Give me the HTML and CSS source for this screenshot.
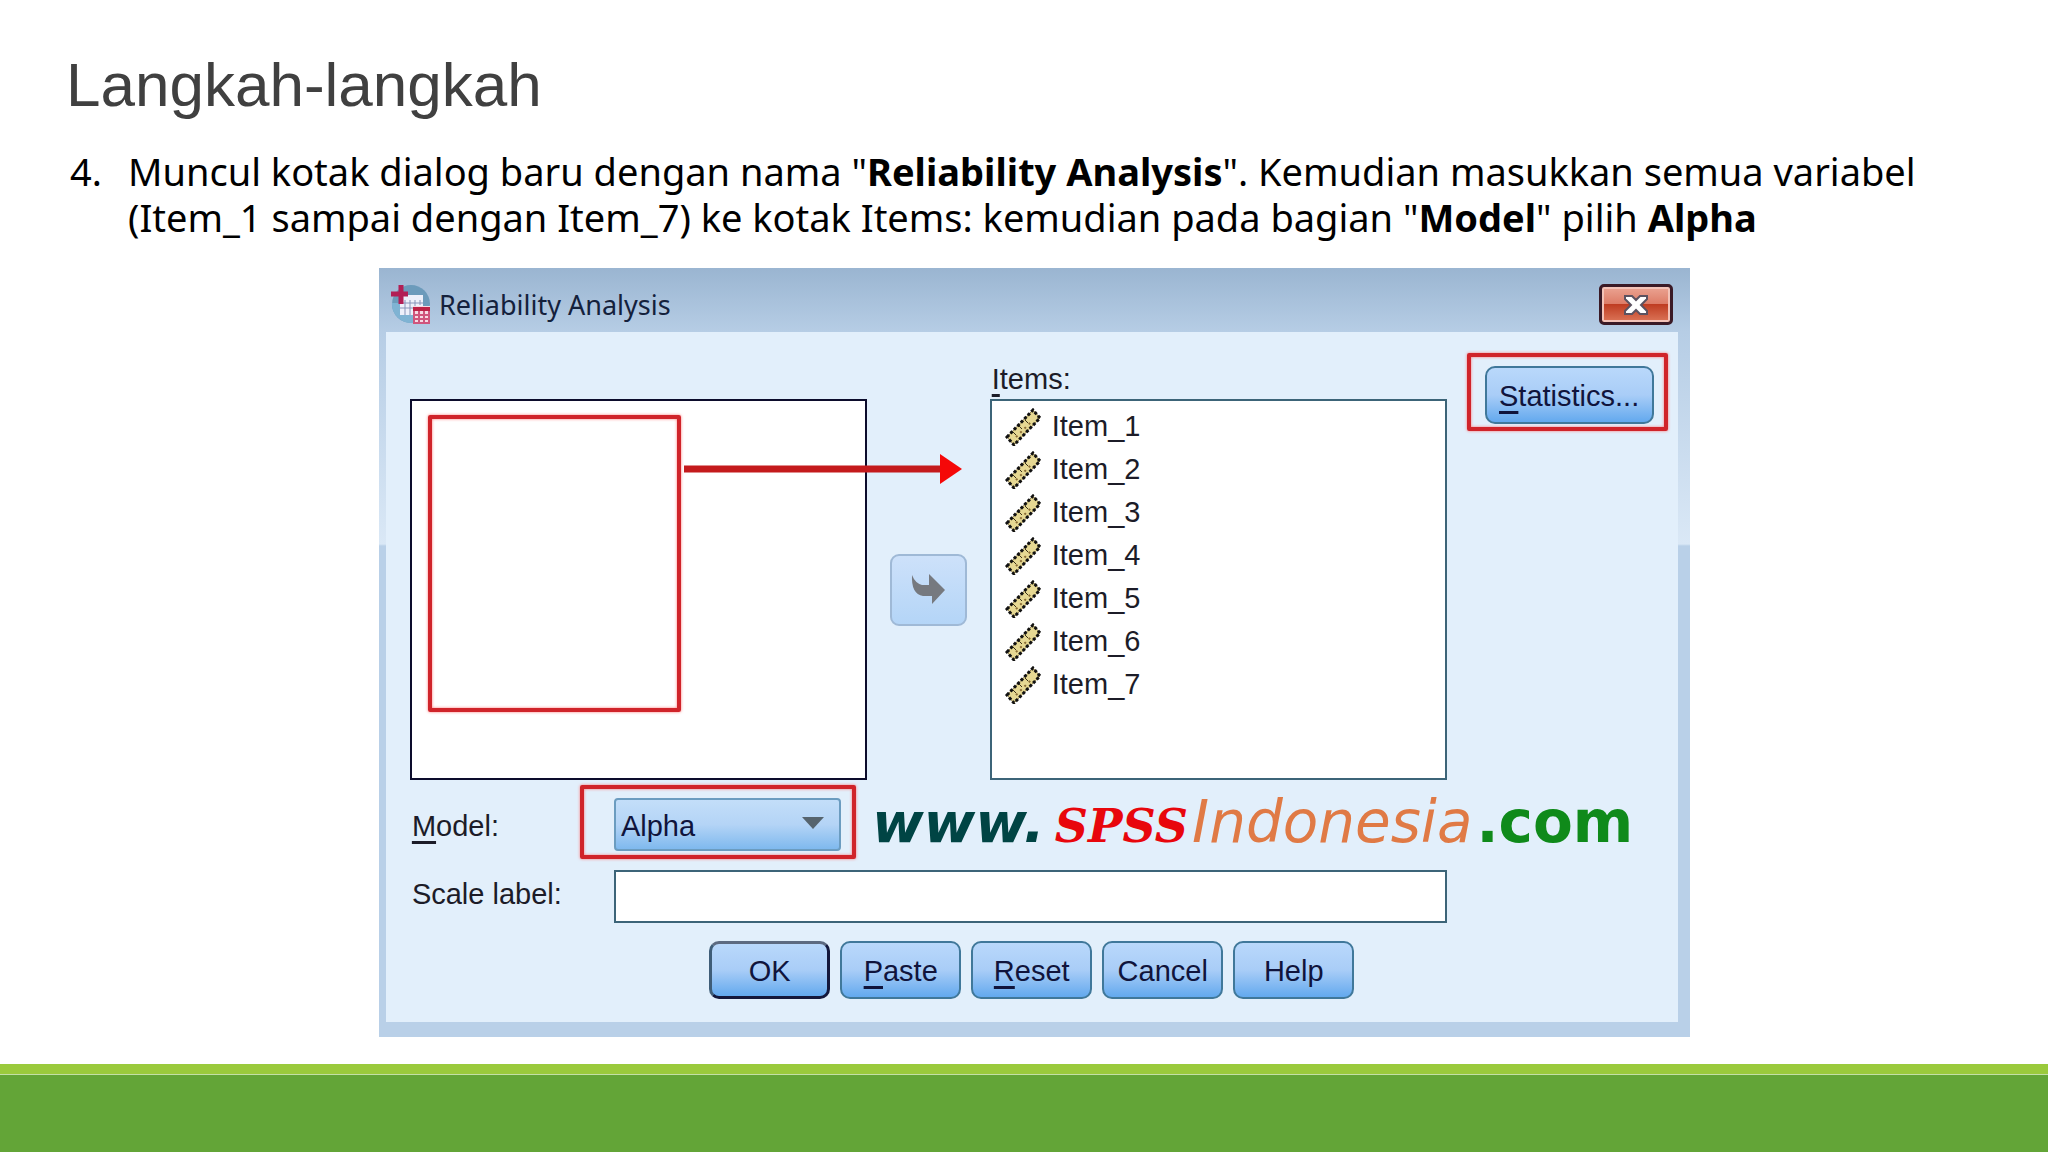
FILE: index.html
```html
<!DOCTYPE html>
<html lang="id">
<head>
    <meta charset="UTF-8">
    <meta name="viewport" content="width=device-width, initial-scale=1.0">
    <title>Langkah-langkah</title>
    <link rel="stylesheet" href="styles.css">
</head>
<body>

<!-- Shared icons -->
<svg class="defs" aria-hidden="true">
    <symbol id="ruler" viewBox="0 0 36 38">
        <path d="M2 29 L28 2 L35 10 L9 37 Z" fill="#e6d893" stroke="#8d7c45" stroke-width="1"/>
        <path d="M2 29 L28 2 L35 10 L9 37 Z" fill="none" stroke="#111" stroke-width="3" stroke-dasharray="3 2"/>
        <path d="M11 29 L28 12" stroke="#8a6c35" stroke-width="2" stroke-dasharray="2 4"/>
        <path d="M8 24 l3 3 M14 18 l3 3 M20 12 l3 3" stroke="#3a3016" stroke-width="1"/>
    </symbol>
</svg>

<main class="slide">
    <h1>Langkah-langkah</h1>
    <ol class="steps">
        <li>
            <p>Muncul kotak dialog baru dengan nama "<strong>Reliability Analysis</strong>". Kemudian masukkan semua variabel (Item_1 sampai dengan Item_7) ke kotak Items: kemudian pada bagian "<strong>Model</strong>" pilih <strong>Alpha</strong></p>
        </li>
    </ol>

    <section class="dialog">
        <header class="title-bar">
            <svg class="app-icon" viewBox="0 0 40 40">
                <circle cx="20" cy="19" r="19" fill="#6c9bbb"/>
                <path d="M1 18 A19 19 0 0 0 22 38 V18 Z" fill="#7fb3d3"/>
                <path d="M9 10 H32 V30 H9 Z" fill="#edf0fa"/>
                <path d="M9 18 H32 M9 23 H24 M14 15 V30 M19 15 V30 M24 15 V24 M29 15 V20" stroke="#8794b9" stroke-width="1"/>
                <path d="M0 9 H17 M10 0 V19" stroke="#b21f55" stroke-width="5"/>
                <path d="M22 21 H39 V38 H22 Z" fill="#f6d9e3"/>
                <path d="M22 22 H39 V26 H22 Z" fill="#bd2247"/>
                <path d="M22 30 H39 M22 34 H39 M22 38 H39 M23 26 V38 M28 26 V38 M33 26 V38 M38 26 V38" stroke="#d0557c" stroke-width="2"/>
            </svg>
            <h2>Reliability Analysis</h2>
            <button type="button" class="close" aria-label="Close">
                <svg viewBox="0 0 26 22"><path d="M2 2 H9 L13 6 L17 2 H24 V5 L18 11 L24 17 V20 H17 L13 16 L9 20 H2 V17 L8 11 L2 5 Z" fill="#fff" stroke="#5c5260" stroke-width="2"/></svg>
            </button>
        </header>

        <form class="dialog-body">
            <div class="variables">
                <div class="listbox source">
                    <div class="mark source-mark"></div>
                    <svg class="arrow" viewBox="0 0 278 30">
                        <path d="M0 15 H258" stroke="#c41a1c" stroke-width="7"/>
                        <path d="M256 0 L278 15 L256 30 Z" fill="#f50808"/>
                    </svg>
                </div>
                <button type="button" class="move" aria-label="Move" disabled>
                    <svg viewBox="0 0 34 30"><path d="M1 1 Q4 9 11 11 H18 V0 L34 16 L21 30 V22 H12 Q0 20 1 1 Z" fill="#76797f"/></svg>
                </button>
                <div class="target">
                    <span class="caption" id="items"><u>I</u>tems:</span>
                    <ul class="listbox" aria-labelledby="items">
                        <li><svg><use href="#ruler"/></svg>Item_1</li>
                        <li><svg><use href="#ruler"/></svg>Item_2</li>
                        <li><svg><use href="#ruler"/></svg>Item_3</li>
                        <li><svg><use href="#ruler"/></svg>Item_4</li>
                        <li><svg><use href="#ruler"/></svg>Item_5</li>
                        <li><svg><use href="#ruler"/></svg>Item_6</li>
                        <li><svg><use href="#ruler"/></svg>Item_7</li>
                    </ul>
                </div>
                <div class="mark stats-mark">
                    <button type="button" class="btn"><span><u>S</u>tatistics...</span></button>
                </div>
            </div>

            <div class="row model-row">
                <label for="model"><u>M</u>odel:</label>
                <div class="mark model-mark">
                    <select id="model">
                        <option>Alpha</option>
                    </select>
                    <svg class="caret" viewBox="0 0 22 12"><path d="M0 0 H22 L11 12 Z" fill="#56646e"/></svg>
                </div>
                <div class="site">
                    <span class="www">www.</span>
                    <span class="spss">SPSS</span>
                    <span class="indonesia">Indonesia</span>
                    <span class="com">.com</span>
                </div>
            </div>

            <div class="row">
                <label for="scale">Scale label:</label>
                <input type="text" id="scale">
            </div>

            <div class="buttons">
                <button type="button" class="btn default">OK</button>
                <button type="button" class="btn"><span><u>P</u>aste</span></button>
                <button type="button" class="btn"><span><u>R</u>eset</span></button>
                <button type="button" class="btn">Cancel</button>
                <button type="button" class="btn">Help</button>
            </div>
        </form>
    </section>
</main>
<footer class="band"></footer>

</body>
</html>
```
FILE: styles.css
```css
* {
    box-sizing: border-box;
}
body {
    margin: 0;
    min-height: 100vh;
    display: flex;
    flex-direction: column;
    background-color: #fff;
    color: #000;
    font-family: "Noto Sans", sans-serif;
}
.defs {
    position: absolute;
    width: 0;
    height: 0;
}
h1 {
    margin: 42px 66px 0;
    font-family: "Liberation Sans Narrow", "Liberation Sans", sans-serif;
    font-size: 62px;
    font-weight: normal;
    line-height: 86px;
    color: #404040;
}
.steps {
    margin: 20px 68px 0 70px;
    padding: 0;
    list-style: none;
    counter-reset: step 3;
    font-size: 38px;
    line-height: 46px;
}
.steps li {
    display: flex;
    counter-increment: step;
}
.steps li::before {
    content: counter(step) ".";
    flex: 0 0 58px;
}
.steps p {
    margin: 0;
}

/* Dialog window */
.dialog {
    width: 64%;
    margin: 28px 0 26px 18.5%;
    padding: 0 12px 15px 7px;
    background: linear-gradient(#9ab5d1 0, #b6cde5 64px, #dae8f6 276px, #b9d0e8 278px);
    font-family: "Liberation Sans", Arial, sans-serif;
    font-size: 29px;
    color: #1c1c28;
}
.title-bar {
    display: flex;
    align-items: center;
    height: 64px;
    padding: 9px 5px 0;
}
.app-icon {
    width: 40px;
    height: 40px;
}
.title-bar h2 {
    flex: 1;
    margin: 0 8px;
    font-family: "Noto Sans", sans-serif;
    font-size: 27px;
    font-weight: normal;
    color: #14213c;
}
.close {
    display: flex;
    align-items: center;
    justify-content: center;
    width: 74px;
    height: 41px;
    padding: 0;
    border: 3px solid #3a1a26;
    border-radius: 5px;
    box-shadow: inset 0 0 0 2px #f3c3b8;
    background: linear-gradient(#eba493 0, #dd7c67 48%, #bf3d22 50%, #dc7659 100%);
}
.close svg {
    width: 26px;
    height: 22px;
}
.dialog-body {
    padding: 24px 10px 23px 24px;
    background-color: #e2effb;
}
u {
    text-decoration-thickness: 3px;
    text-underline-offset: 5px;
    text-decoration-skip-ink: none;
}

/* Red marks drawn over the dialog */
.mark {
    border: 4px solid #d0242a;
    border-radius: 2px;
    box-shadow: 0 0 3px #f77, inset 0 0 3px #f77;
}

.variables {
    display: grid;
    grid-template-columns: 457fr 123fr 457fr 221fr;
    align-items: end;
}
.listbox {
    height: 381px;
    margin: 0;
    padding: 4px 13px;
    border: 2px solid #3c6478;
    background-color: #fff;
    list-style: none;
}
.source {
    position: relative;
    border-color: #0c0c2c;
}
.source-mark {
    position: absolute;
    top: 14px;
    left: 16px;
    width: 56%;
    height: 297px;
}
.arrow {
    position: absolute;
    top: 53px;
    left: 60%;
    width: 278px;
    height: 30px;
    z-index: 1;
}
.move {
    justify-self: center;
    width: 77px;
    height: 72px;
    margin-bottom: 154px;
    padding: 0;
    border: 2px solid #9fb9d6;
    border-radius: 9px;
    background: linear-gradient(#cde1fa, #b4d5f7);
}
.move svg {
    width: 34px;
    height: 30px;
}
.caption {
    display: block;
    padding: 4px 2px 0;
    line-height: 39px;
}
.listbox li {
    display: flex;
    align-items: center;
    gap: 11px;
    height: 43px;
}
.listbox li svg {
    width: 36px;
    height: 38px;
}
.stats-mark {
    align-self: start;
    margin: -3px 0 0 20px;
    padding: 9px 10px 3px 14px;
}
.btn {
    width: 121px;
    height: 58px;
    padding: 2px 0 0;
    border: 2px solid #40789a;
    border-radius: 10px;
    background: linear-gradient(#b9d8fb 0, #a9cdf7 50%, #63a9ee 100%);
    font: inherit;
    color: #10143c;
}
.stats-mark .btn {
    width: 100%;
}
.default {
    border: 3px solid #14183c;
    border-top-color: #5d6a80;
    border-left-color: #3f5d78;
}

.row {
    display: flex;
    align-items: center;
    width: 82.5%;
    margin-top: 11px;
}
.row label {
    flex: 0 0 204px;
    padding: 0 0 4px 2px;
}
.model-row {
    align-items: baseline;
    width: auto;
    margin-top: 5px;
}
.model-row label {
    flex-basis: 170px;
}
.model-mark {
    position: relative;
    flex: 0 0 276px;
    padding: 9px 11px 4px 30px;
}
.row select {
    display: block;
    width: 100%;
    height: 53px;
    padding: 2px 5px 0;
    appearance: none;
    border: 2px solid #6b9cc0;
    border-radius: 4px;
    background: linear-gradient(#c3def9, #b4d4f6 50%, #7fb9ee);
    font: inherit;
    color: #10143c;
}
.caret {
    position: absolute;
    top: 28px;
    right: 28px;
    width: 22px;
    height: 12px;
}
.row input {
    flex: 1;
    min-width: 0;
    height: 53px;
    padding: 0 8px;
    border: 2px solid #3c6478;
    background-color: #fff;
    font: inherit;
}

/* Site name */
.site {
    display: flex;
    align-self: center;
    align-items: baseline;
    height: 64px;
    padding-left: 16px;
}
.www {
    margin-right: 10px;
    font: italic bold 56px/64px "DejaVu Sans", sans-serif;
    color: #044;
}
.spss {
    margin-right: 4px;
    font: italic bold 46px/64px "DejaVu Serif", serif;
    color: #e8060c;
}
.indonesia {
    margin-right: 4px;
    font: italic 58px/64px "DejaVu Sans", sans-serif;
    color: #e07a45;
}
.com {
    font: bold 58px/64px "DejaVu Sans", sans-serif;
    color: #0f8a1a;
}

.buttons {
    display: flex;
    justify-content: center;
    gap: 10px;
    margin: 18px 14px 0 0;
}

.band {
    height: 88px;
    margin-top: auto;
    border-top: 10px solid #9aca3c;
    background-color: #63a537;
    box-shadow: inset 0 1px #c3dfa6;
}
```
